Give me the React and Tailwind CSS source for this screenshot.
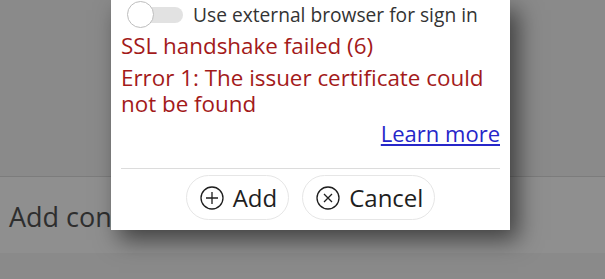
export default function App() {
  const font = { fontFamily: '"Open Sans", "Lato", sans-serif' };
  return (
    <div className="relative w-[605px] h-[279px] overflow-hidden bg-[#8a8a8a]" style={font}>
      {/* background page */}
      <div className="flex flex-col">
        <div className="h-[176px]" />
        <div className="h-px bg-[#7c7c7c]" />
        <div className="h-[76px] bg-[#8f8f8f] flex items-center pl-[9px] pt-[5px] text-[27px] text-[#2e2e2e]">
          Add connection
        </div>
      </div>

      {/* dialog */}
      <div className="absolute left-[111px] top-0 w-[399px] h-[230px] bg-white shadow-[8px_10px_22px_rgba(0,0,0,0.55)] flex flex-col px-[10px]">
        <div className="flex items-center h-[27px] mt-[1px] pl-[6px] gap-[10px]">
          <div className="relative w-[56px] h-[27px] flex items-center">
            <div className="absolute left-[8px] right-0 h-[16px] rounded-full bg-[#e2e2e2]" />
            <div className="absolute left-0 w-[27px] h-[27px] rounded-full bg-white border border-[#bdbdbd]" />
          </div>
          <span className="text-[19.2px] leading-[26px] text-[#333]">Use external browser for sign in</span>
        </div>
        <div className="text-[22.4px] leading-[26px] text-[#a31a1a] mt-[5px]">SSL handshake failed (6)</div>
        <div className="text-[22.4px] leading-[26px] text-[#a31a1a] mt-[6px]">
          Error 1: The issuer certificate could
          <br />
          not be found
        </div>
        <div className="flex justify-end mt-[3px]">
          <a className="text-[22px] leading-[26px] text-[#2626c9] underline underline-offset-2">Learn more</a>
        </div>
        <div className="h-px bg-[#dcdcdc] mt-[22px]" />
        <div className="flex justify-center gap-[13px] mt-[6px]">
          <button className="h-[45px] pl-[13px] pr-[11px] flex items-center gap-[9px] rounded-full border border-[#e6e6e6] text-[24px] text-[#1e1e1e]">
            <svg width="24" height="24" viewBox="0 0 24 24" fill="none" stroke="#1e1e1e" strokeWidth="1.3">
              <circle cx="12" cy="12" r="11" />
              <path d="M12 6v12M6 12h12" />
            </svg>
            Add
          </button>
          <button className="h-[45px] pl-[13px] pr-[11px] flex items-center gap-[9px] rounded-full border border-[#e6e6e6] text-[24px] text-[#1e1e1e]">
            <svg width="24" height="24" viewBox="0 0 24 24" fill="none" stroke="#1e1e1e" strokeWidth="1.3">
              <circle cx="12" cy="12" r="11" />
              <path d="M8 8l8 8M16 8l-8 8" />
            </svg>
            Cancel
          </button>
        </div>
      </div>
    </div>
  );
}
